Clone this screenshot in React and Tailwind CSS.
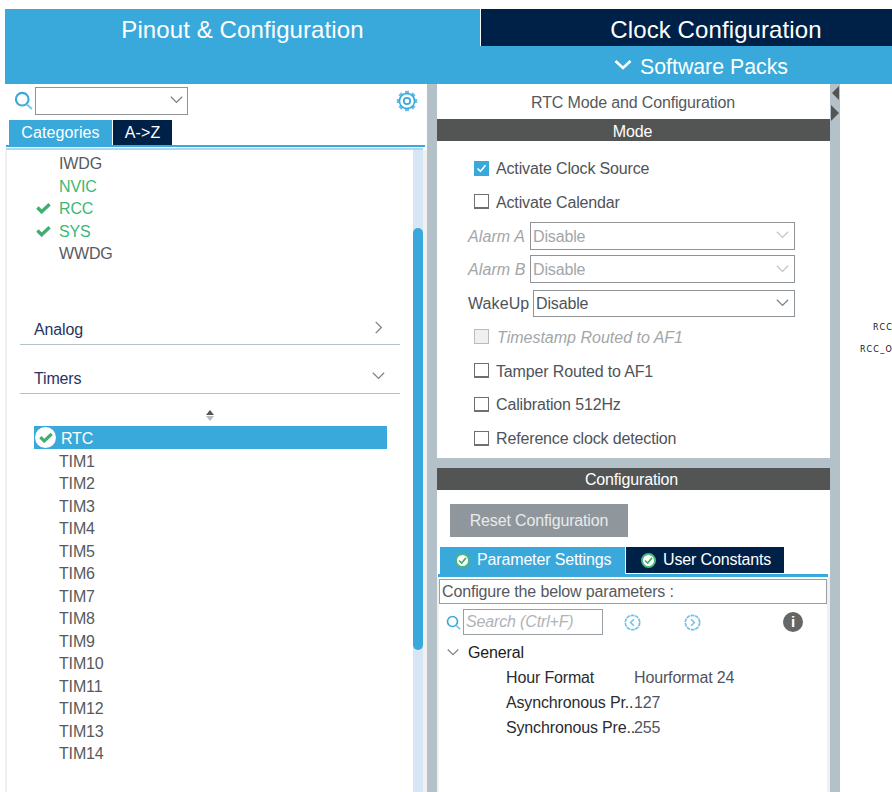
import React from "react";

const Chevron = ({ dir = "down", className = "", color = "#7f8488", w = 1.4 }) => {
  const pts = dir === "down" ? "2,4 8,10 14,4" : "5,2 11,8 5,14";
  return (
    <svg viewBox="0 0 16 16" className={className} fill="none" stroke={color} strokeWidth={w}>
      <polyline points={pts} />
    </svg>
  );
};

const SearchIcon = ({ className = "" }) => (
  <svg viewBox="0 0 18 18" className={className} fill="none" stroke="#39a9dc" strokeWidth="2">
    <circle cx="7.8" cy="7.8" r="6" />
    <line x1="12" y1="12.5" x2="17" y2="17" stroke="#7cc6ea" />
  </svg>
);

const Gear = () => {
  const teeth = [0, 45, 90, 135, 180, 225, 270, 315];
  return (
    <svg viewBox="0 0 22 22" className="w-[22px] h-[22px]" fill="none" stroke="#39a9dc">
      {teeth.map((a) => (
        <rect key={a} x="9" y="0.8" width="4" height="3.4" fill="#6dbfe6" stroke="none" transform={`rotate(${a} 11 11)`} />
      ))}
      <circle cx="11" cy="11" r="7.6" strokeWidth="1.5" />
      <circle cx="11" cy="11" r="3.2" strokeWidth="1.8" />
    </svg>
  );
};

const Tick = ({ className = "" }) => (
  <svg viewBox="0 0 16 12" className={className} fill="none" stroke="#3fae6e" strokeWidth="3.6">
    <polyline points="1.5,5.5 6,10 14.5,2" />
  </svg>
);

const Badge = () => (
  <span className="w-[15px] h-[15px] rounded-full bg-white border-2 border-[#4fb57c] flex items-center justify-center shrink-0">
    <svg viewBox="0 0 10 8" className="w-[9px] h-[7px]" fill="none" stroke="#3fae6e" strokeWidth="1.8">
      <polyline points="1,4 4,7 9,1" />
    </svg>
  </span>
);

const NavArrow = ({ dir }) => (
  <svg viewBox="0 0 18 18" className="w-[17px] h-[17px]" fill="none" stroke="#6cc3ea">
    <circle cx="9" cy="9" r="7.6" strokeWidth="1.8" strokeDasharray="4 0.8" />
    <polyline points={dir === "l" ? "10.5,5.5 7,9 10.5,12.5" : "7.5,5.5 11,9 7.5,12.5"} strokeWidth="1.6" />
  </svg>
);

const Box = ({ checked, disabled }) => (
  <span
    className={`w-[15px] h-[15px] shrink-0 flex items-center justify-center border ${
      checked
        ? "bg-[#39a9dc] border-[#39a9dc]"
        : disabled
        ? "bg-[#eef0f2] border-[#b9bcbf]"
        : "bg-white border-[#6f6f6f] border-b-2 border-r-[1.5px]"
    }`}
  >
    {checked && (
      <svg viewBox="0 0 12 10" className="w-[11px] h-[9px]" fill="none" stroke="white" strokeWidth="1.8">
        <polyline points="1.5,5 4.8,8.2 10.5,1.5" />
      </svg>
    )}
  </span>
);

const CheckRow = ({ label, checked, disabled }) => (
  <div className="h-[33.75px] flex items-center pl-[37px]">
    <Box checked={checked} disabled={disabled} />
    <span className={`pt-[2px] ${disabled ? "italic text-[#a3a6a9] ml-[8px] tracking-normal" : "text-[#4f5359] ml-[7px]"}`}>{label}</span>
  </div>
);

const SelectRow = ({ label, disabled, gap }) => (
  <div className="h-[33.75px] flex items-center pl-[31px]">
    <span className={`${gap} shrink-0 pt-[2px] tracking-[0.1px] ${disabled ? "italic text-[#a3a6a9]" : "text-[#4f5359]"}`}>{label}</span>
    <div
      className={`flex-1 mr-[35px] flex items-center justify-between border border-[#8f9499] pl-[2px] pr-[4px] ${
        disabled ? "h-[28px] text-[#a3a6a9]" : "h-[27px] text-[#4f5359]"
      }`}
    >
      <span className="pt-[2px]">Disable</span>
      <Chevron className="w-[15px] h-[15px]" color={disabled ? "#c4c6c8" : "#7f8488"} />
    </div>
  </div>
);

const Item = ({ label, green, tick }) => (
  <div className={`h-[22.5px] flex items-center pl-[28px] relative ${green ? "text-[#3db874]" : "text-[#565a60]"}`}>
    {tick && <Tick className="absolute left-[5px] top-[4px] w-[15px] h-[12px]" />}
    {label}
  </div>
);

const Section = ({ label, dir, h }) => (
  <div className={`${h} mx-[13px] border-b border-[#b5c1c8] flex items-center justify-between pl-[14px] pr-[14px] text-[#27345f]`}>
    <span className="pt-[2px]">{label}</span>
    <Chevron dir={dir} className="w-[15px] h-[15px] mb-[2px]" />
  </div>
);

const tims = Array.from({ length: 14 }, (_, i) => `TIM${i + 1}`);

export default function App() {
  return (
    <div
      className="relative w-[892px] h-[792px] overflow-hidden bg-white pt-[9px] pl-[5px] text-[16px] tracking-[-0.15px] flex flex-col"
      style={{ fontFamily: '"Liberation Sans", Arial, sans-serif' }}
    >
      {/* top tabs */}
      <div className="flex h-[37px] shrink-0 text-white text-[24px] tracking-[0.1px]">
        <div className="w-[475px] shrink-0 bg-[#39a9dc] flex items-center justify-center pt-[4px]">Pinout &amp; Configuration</div>
        <div className="w-[1px] shrink-0 bg-white" />
        <div className="w-[470px] shrink-0 bg-[#002147] flex items-center justify-center pt-[4px]">Clock Configuration</div>
      </div>
      <div className="h-[38px] shrink-0 bg-[#39a9dc] flex items-center pl-[609px] text-white text-[21.3px] tracking-normal w-[887px]">
        <svg viewBox="0 0 18 12" className="w-[18px] h-[12px] mr-[8px]" fill="none" stroke="white" strokeWidth="2.6">
          <polyline points="1.5,2 9,9 16.5,2" />
        </svg>
        <span className="pt-[5px]">Software Packs</span>
      </div>

      <div className="flex flex-1 min-h-0">
        {/* left column */}
        <div className="w-[422px] shrink-0 flex flex-col">
          <div className="h-[36px] shrink-0 flex items-center pl-[9px] pr-[9px] pb-[3px]">
            <SearchIcon className="w-[19px] h-[19px] shrink-0" />
            <div className="ml-[2px] w-[153px] h-[28px] border border-[#8f9499] flex items-center justify-end pr-[3px]">
              <Chevron className="w-[15px] h-[15px]" />
            </div>
            <div className="flex-1" />
            <Gear />
          </div>
          <div className="flex h-[25px] shrink-0 pl-[4px] text-white tracking-[0.1px]">
            <div className="w-[103px] bg-[#39a9dc] flex items-center justify-center">Categories</div>
            <div className="w-[59px] ml-[1px] bg-[#002147] flex items-center justify-center">A-&gt;Z</div>
          </div>
          <div className="h-[2px] shrink-0 ml-[1px] mr-[2px] bg-[#39a9dc]" />
          <div className="h-[1px] shrink-0" />
          <div className="h-[2px] shrink-0 ml-[1px] mr-[4px] bg-[#a9d8ef]" />
          <div className="flex flex-1 min-h-0">
            <div className="w-[2px] bg-[#f0f0f0] shrink-0" />
            <div className="flex-1 pt-[3px]">
              <div className="pl-[24px]">
                <Item label="IWDG" />
                <Item label="NVIC" green />
                <Item label="RCC" green tick />
                <Item label="SYS" green tick />
                <Item label="WWDG" />
              </div>
              <Section label="Analog" dir="right" h="h-[79px] pt-[48px]" />
              <Section label="Timers" dir="down" h="h-[49px] pt-[18px]" />
              <div className="h-[32px] flex flex-col items-center justify-center pl-[7px] pt-[12px] gap-[1px] pr-[8px]">
                <span className="w-0 h-0 border-x-[4px] border-x-transparent border-b-[5px] border-b-[#555]" />
                <span className="w-0 h-0 border-x-[4px] border-x-transparent border-t-[5px] border-t-[#bbb]" />
              </div>
              <div className="ml-[27px] w-[353px] h-[23px] bg-[#39a9dc] flex items-center text-white relative">
                <span className="w-[21px] h-[21px] rounded-full bg-white flex items-center justify-center ml-[1px]">
                  <Tick className="w-[14px] h-[11px]" />
                </span>
                <span className="ml-[5px] pt-[3px]">RTC</span>
              </div>
              <div className="pl-[24px] pt-[1.75px]">
                {tims.map((t) => (
                  <Item key={t} label={t} />
                ))}
              </div>
            </div>
            <div className="w-[10px] shrink-0 bg-[#d6e6f5]">
              <div className="mt-[78px] h-[422px] bg-[#39a9dc] rounded-full" />
            </div>
            <div className="w-[4px] bg-[#f0f0f0] shrink-0" />
          </div>
        </div>

        {/* splitter */}
        <div className="w-[10px] shrink-0 bg-[#b5c1c8]" />

        {/* right column */}
        <div className="w-[394px] shrink-0 flex flex-col bg-[#b5c1c8]">
          <div className="h-[374px] shrink-0 bg-white mr-[1px]">
            <div className="h-[35px] flex items-center justify-center text-[#55595e] pt-[2px] pr-[1px]">RTC Mode and Configuration</div>
            <div className="h-[22px] bg-[#535554] text-white flex items-center justify-center pt-[3px] pr-[2px]">Mode</div>
            <div className="pt-[10.25px]">
              <CheckRow label="Activate Clock Source" checked />
              <CheckRow label="Activate Calendar" />
              <SelectRow label="Alarm A" disabled gap="w-[62px]" />
              <SelectRow label="Alarm B" disabled gap="w-[62px]" />
              <SelectRow label="WakeUp" gap="w-[65px]" />
              <CheckRow label="Timestamp Routed to AF1" disabled />
              <CheckRow label="Tamper Routed to AF1" />
              <CheckRow label="Calibration 512Hz" />
              <CheckRow label="Reference clock detection" />
            </div>
          </div>
          <div className="mt-[10px] flex-1 min-h-0 bg-white mr-[1px] flex flex-col">
            <div className="h-[22px] shrink-0 bg-[#535554] text-white flex items-center justify-center pt-[2px] pr-[4px]">Configuration</div>
            <div className="mt-[14px] ml-[13px] w-[178px] h-[33px] shrink-0 bg-[#90979c] text-[#e8eaeb] flex items-center justify-center">
              Reset Configuration
            </div>
            <div className="mt-[10px] ml-[3px] flex h-[27px] shrink-0 text-white">
              <div className="w-[185px] bg-[#39a9dc] flex items-center pl-[15px] pb-[1px]">
                <Badge />
                <span className="ml-[7px]">Parameter Settings</span>
              </div>
              <div className="w-[158px] ml-[1px] h-[26px] bg-[#002147] flex items-center pl-[15px]">
                <Badge />
                <span className="ml-[7px]">User Constants</span>
              </div>
            </div>
            <div className="h-[3px] shrink-0 ml-[1px] mr-[2px] bg-[#39a9dc]" />
            <div className="flex flex-1 min-h-0">
              <div className="w-[2px] shrink-0 bg-[#f0f0f0]" />
              <div className="flex-1 pt-[2px] min-w-0">
                <div className="h-[25px] border border-[#9a9fa3] text-[#55595e] flex items-center pl-[2px] w-[388px]">
                  Configure the below parameters :
                </div>
                <div className="mt-[5px] h-[26px] flex items-center pl-[7px]">
                  <SearchIcon className="w-[15px] h-[15px] shrink-0" />
                  <div className="ml-[2px] w-[140px] h-[26px] border border-[#9a9fa3] flex items-center pl-[2px] italic text-[#b0b3b6]">
                    Search (Ctrl+F)
                  </div>
                  <div className="ml-[21px]"><NavArrow dir="l" /></div>
                  <div className="ml-[43px]"><NavArrow dir="r" /></div>
                  <div className="ml-[82px] w-[20px] h-[20px] rounded-full bg-[#666] text-white font-bold flex items-center justify-center text-[15px]">i</div>
                </div>
                <div className="mt-[5.5px] h-[25px] flex items-center pl-[7px] text-[#1b1b1b]">
                  <Chevron className="w-[14px] h-[14px]" />
                  <span className="ml-[8px]">General</span>
                </div>
                {[
                  ["Hour Format", "Hourformat 24"],
                  ["Asynchronous Pr..", "127"],
                  ["Synchronous Pre..", "255"],
                ].map(([a, b]) => (
                  <div key={a} className="h-[25px] flex items-center pl-[67px]">
                    <span className="w-[128px] shrink-0 text-[#2a2c30] whitespace-nowrap">{a}</span>
                    <span className="text-[#4f5560]">{b}</span>
                  </div>
                ))}
              </div>
              <div className="w-[3px] shrink-0 bg-[#f0f0f0]" />
            </div>
          </div>
        </div>

        {/* splitter with arrows */}
        <div className="w-[9px] shrink-0 bg-[#b5c1c8] flex flex-col pt-[2px]">
          <span className="w-0 h-0 ml-[1px] border-y-[7px] border-y-transparent border-r-[7px] border-r-[#535554]" />
          <span className="w-0 h-0 mt-[5px] border-y-[8px] border-y-transparent border-l-[8px] border-l-[#535554]" />
        </div>
      </div>

      {/* canvas pin labels */}
      <span className="absolute left-[873px] top-[322px] text-[8px] tracking-[1.3px] text-[#111] whitespace-nowrap" style={{ fontFamily: '"DejaVu Sans", sans-serif' }}>RCC_OSC_IN</span>
      <span className="absolute left-[860px] top-[344px] text-[8px] tracking-[1.3px] text-[#111] whitespace-nowrap" style={{ fontFamily: '"DejaVu Sans", sans-serif' }}>RCC_OSC_OUT</span>
    </div>
  );
}
